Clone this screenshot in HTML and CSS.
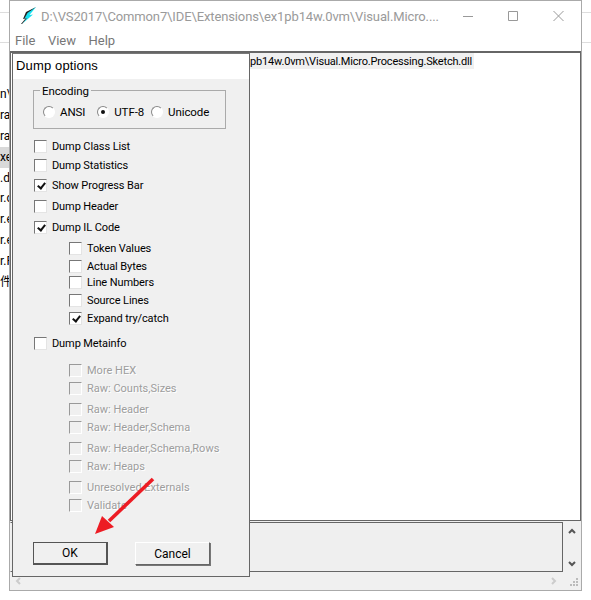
FILE: index.html
```html
<!DOCTYPE html>
<html lang="en">
<head>
  <meta charset="UTF-8" />
  <title>Dump options</title>
  <link rel="stylesheet" href="styles.css">
</head>
<body>

  <div class="desktop">
    <ul class="behind">
      <li>n\</li>
      <li>ra</li>
      <li>ra</li>
      <li class="behind-selected">xe</li>
      <li>.d</li>
      <li>r.c</li>
      <li>r.e</li>
      <li>r.e</li>
      <li>r.F</li>
      <li>件</li>
    </ul>
    <div class="edge edge-one"></div>
    <div class="edge edge-two"></div>

    <div class="window">
      <div class="titlebar">
        <svg class="app-icon" width="16" height="17" viewBox="0 0 16 17">
          <path d="M15 0 L6 5 L3 12 L6 11 L1 17 L12 7.5 L8.5 8 Z" fill="#19e0f0"/>
          <path d="M15 0 L5 5 L2 12 L4.5 11.5 L0 17 L1 17 L6 11 L3.5 11.5 L6.5 6 Z" fill="#222"/>
        </svg>
        <span class="window-title">D:\VS2017\Common7\IDE\Extensions\ex1pb14w.0vm\Visual.Micro....</span>
        <svg class="caption" width="101" height="12" viewBox="0 0 101 12">
          <path d="M0 6.5 H10" stroke="#999" fill="none"/>
          <path d="M45.5 1.5 H54.5 V10.5 H45.5 Z" stroke="#999" fill="none"/>
          <path d="M90.5 1 L100.5 11 M100.5 1 L90.5 11" stroke="#999" fill="none"/>
        </svg>
      </div>
      <div class="menubar">
        <span>File</span>
        <span>View</span>
        <span>Help</span>
      </div>
      <div class="client">
        <div class="tree">
          <span class="tree-line">pb14w.0vm\Visual.Micro.Processing.Sketch.dll</span>
        </div>
        <div class="lower">
          <div class="lower-box"></div>
          <div class="vscroll">
            <svg width="8" height="6" viewBox="0 0 8 6"><path d="M1 5 L4 2 L7 5" stroke="#555" stroke-width="2" fill="none"/></svg>
            <svg width="8" height="6" viewBox="0 0 8 6"><path d="M1 1 L4 4 L7 1" stroke="#555" stroke-width="2" fill="none"/></svg>
          </div>
        </div>
        <div class="hscroll">
          <svg class="hscroll-left" width="7" height="8" viewBox="0 0 7 8"><path d="M5 1 L2 4 L5 7" stroke="#ccc" stroke-width="2" fill="none"/></svg>
          <svg class="hscroll-right" width="7" height="8" viewBox="0 0 7 8"><path d="M2 1 L5 4 L2 7" stroke="#ccc" stroke-width="2" fill="none"/></svg>
          <svg class="grip" width="9" height="9" viewBox="0 0 9 9"><path d="M7 1h2v2h-2z M4 4h2v2h-2z M7 4h2v2h-2z M1 7h2v2h-2z M4 7h2v2h-2z M7 7h2v2h-2z" fill="#bbb"/></svg>
        </div>
      </div>
    </div>

    <div class="dialog">
      <div class="dialog-title">Dump options</div>
      <div class="dialog-body">
        <div class="encoding">
          <span class="encoding-label">Encoding</span>
          <label class="radio"><span class="radio-dot"></span>ANSI</label>
          <label class="radio radio-utf"><span class="radio-dot radio-on"></span>UTF-8</label>
          <label class="radio radio-uni"><span class="radio-dot"></span>Unicode</label>
        </div>

        <div class="options">
          <div class="row h19"><span class="box"></span>Dump Class List</div>
          <div class="row h20"><span class="box"></span>Dump Statistics</div>
          <div class="row h21"><span class="box checked"></span>Show Progress Bar</div>
          <div class="row h21"><span class="box"></span>Dump Header</div>
          <div class="row h21"><span class="box checked"></span>Dump IL Code</div>
          <div class="row h18 sub"><span class="box"></span>Token Values</div>
          <div class="row h16 sub"><span class="box"></span>Actual Bytes</div>
          <div class="row h18 sub"><span class="box"></span>Line Numbers</div>
          <div class="row h18 sub"><span class="box"></span>Source Lines</div>
          <div class="row h25 sub"><span class="box checked"></span>Expand try/catch</div>
          <div class="row h27"><span class="box"></span>Dump Metainfo</div>
          <div class="row h18 sub off"><span class="box"></span>More HEX</div>
          <div class="row h21 sub off"><span class="box"></span>Raw: Counts,Sizes</div>
          <div class="row h18 sub off"><span class="box"></span>Raw: Header</div>
          <div class="row h21 sub off"><span class="box"></span>Raw: Header,Schema</div>
          <div class="row h18 sub off"><span class="box"></span>Raw: Header,Schema,Rows</div>
          <div class="row h21 sub off"><span class="box"></span>Raw: Heaps</div>
          <div class="row h18 sub off"><span class="box"></span>Unresolved Externals</div>
          <div class="row h18 sub off"><span class="box"></span>Validate</div>
        </div>

        <div class="buttons">
          <button class="btn btn-default">OK</button>
          <button class="btn">Cancel</button>
        </div>
      </div>
    </div>

    <svg class="arrow" width="70" height="66" viewBox="0 0 70 66">
      <path d="M63 5 L19 47" stroke="#ed1c24" stroke-width="3.6" fill="none"/>
      <path d="M5 60 L12 42 L24 53 Z" fill="#ed1c24"/>
    </svg>
  </div>

</body>
</html>
```

FILE: styles.css
```css
* {
  box-sizing: border-box;
}

body {
  margin: 0;
  background: white;
  font-family: Roboto, "Noto Sans CJK SC", sans-serif;
  font-size: 11px;
  color: #000;
}

.desktop {
  position: relative;
  width: 591px;
  height: 600px;
  overflow: hidden;
}

/* stuff from the window behind */
.behind {
  position: absolute;
  left: 0;
  top: 84px;
  width: 10px;
  margin: 0;
  padding: 0;
  list-style: none;
  overflow: hidden;
  font-size: 12px;
}

.behind li {
  height: 20.9px;
  line-height: 21px;
  text-align: right;
  white-space: nowrap;
}

.behind-selected {
  background: #d9d9d9;
}

.edge {
  position: absolute;
  left: 0;
  width: 591px;
  height: 1px;
  background: #ddd;
}

.edge-one {
  top: 12px;
}

.edge-two {
  top: 42px;
}

.window {
  position: absolute;
  left: 9px;
  top: 0;
  width: 573px;
  height: 591px;
  background: white;
  border: 1px solid #aaa;
  display: flex;
  flex-direction: column;
}

.titlebar {
  height: 29px;
  display: flex;
  align-items: center;
  padding-left: 11px;
  flex-shrink: 0;
}

.app-icon {
  margin-right: 4px;
  flex-shrink: 0;
}

.window-title {
  flex: 1;
  min-width: 0;
  padding-top: 2px;
  font-size: 13px;
  letter-spacing: -0.12px;
  color: #9a9a9a;
  white-space: nowrap;
  overflow: hidden;
}

.caption {
  margin-right: 17px;
  flex-shrink: 0;
}

.menubar {
  height: 21px;
  display: flex;
  gap: 12.5px;
  align-items: center;
  padding-left: 5px;
  font-size: 13px;
  color: #777;
  flex-shrink: 0;
}

.client {
  flex: 1;
  display: flex;
  flex-direction: column;
  background: #f0f0f0;
}

.tree {
  height: 470px;
  background: white;
  border-top: 2px solid #666;
  border-left: 1px solid #666;
  border-right: 1px solid #666;
  border-bottom: 1px solid #666;
  padding-left: 238px;
  font-size: 11px;
  letter-spacing: -0.18px;
}

.tree-line {
  display: block;
  width: 225px;
  height: 16px;
  line-height: 18px;
  padding: 0 2px 0 1px;
  background: #f0f0f0;
  white-space: nowrap;
}

.lower {
  height: 50px;
  margin-top: 1px;
  display: flex;
}

.lower-box {
  flex: 1;
  background: #efefef;
  border: 1px solid #666;
  border-left-color: #f0f0f0;
}

.vscroll {
  width: 18px;
  display: flex;
  flex-direction: column;
  justify-content: space-between;
  align-items: center;
  padding: 6px 0 5px;
}

.hscroll {
  flex: 1;
  display: flex;
  align-items: center;
  padding: 0 3px 0 5px;
}

.hscroll-left {
  margin-right: auto;
}

.hscroll-right {
  margin-right: 12px;
}

.dialog {
  position: absolute;
  left: 12px;
  top: 53px;
  width: 238px;
  height: 524px;
  border: 1px solid #666;
  border-top-color: #777;
  background: #f0f0f0;
  display: flex;
  flex-direction: column;
}

.dialog-title {
  height: 25px;
  background: white;
  font-family: "Liberation Sans", sans-serif;
  font-size: 13px;
  letter-spacing: 0.15px;
  line-height: 24px;
  padding-left: 3px;
  flex-shrink: 0;
}

.dialog-body {
  flex: 1;
  padding: 11px 0 0 21px;
}

.encoding {
  position: relative;
  width: 193px;
  height: 39px;
  margin-left: -1px;
  padding: 4px 0 0 9px;
  border: 1px solid #aaa;
  display: flex;
  align-items: center;
}

.encoding-label {
  position: absolute;
  left: 6px;
  top: -7px;
  padding: 0 2px;
  line-height: 14px;
  font-size: 11.5px;
  letter-spacing: -0.1px;
  background: #f0f0f0;
}

.radio {
  display: flex;
  align-items: center;
  gap: 5px;
  font-size: 11.5px;
  letter-spacing: -0.1px;
}

.radio-utf {
  margin-left: 12px;
}

.radio-uni {
  margin-left: 7px;
}

.radio-dot {
  width: 12px;
  height: 12px;
  border-radius: 50%;
  border: 1px solid #888;
  border-right-color: #fff;
  border-bottom-color: #fff;
  background: white;
  position: relative;
}

.radio-on::after {
  content: "";
  position: absolute;
  left: 3px;
  top: 3px;
  width: 4px;
  height: 4px;
  border-radius: 50%;
  background: #111;
}

.options {
  margin-top: 11px;
}

.row {
  display: flex;
  align-items: flex-start;
  gap: 5px;
  line-height: 14px;
  letter-spacing: -0.1px;
  white-space: nowrap;
}

.h16 { height: 16px; }
.h18 { height: 18px; }
.h19 { height: 19px; }
.h20 { height: 20px; }
.h21 { height: 21px; }
.h25 { height: 25px; }
.h27 { height: 27px; }

.sub {
  margin-left: 35px;
}

.off {
  color: #9d9d9d;
  letter-spacing: 0;
  text-shadow: 1px 1px 0 #fff;
}

.box {
  width: 13px;
  height: 13px;
  background: white;
  border: 1px solid #777;
  border-right-color: #e4e4e4;
  border-bottom-color: #e4e4e4;
  position: relative;
  flex-shrink: 0;
}

.off .box {
  background: #f0f0f0;
  border-color: #999 #fff #fff #999;
}

.checked::after {
  content: "";
  position: absolute;
  left: 4px;
  top: 1px;
  width: 3px;
  height: 6px;
  border: solid #111;
  border-width: 0 2px 2px 0;
  transform: rotate(38deg);
}

.buttons {
  display: flex;
  gap: 27px;
  margin-top: 25px;
  margin-left: -1px;
}

.btn {
  width: 75px;
  height: 23px;
  padding: 0;
  font-family: inherit;
  font-size: 12px;
  color: #000;
  background: #f0f0f0;
  border: 1px solid #fff;
  border-right-color: #666;
  border-bottom-color: #666;
  box-shadow: 1px 1px 0 #777;
}

.btn-default {
  border: 1px solid #555;
  border-right-width: 2px;
  border-bottom-width: 2px;
  box-shadow: none;
}

.arrow {
  position: absolute;
  left: 90px;
  top: 474px;
}
```
